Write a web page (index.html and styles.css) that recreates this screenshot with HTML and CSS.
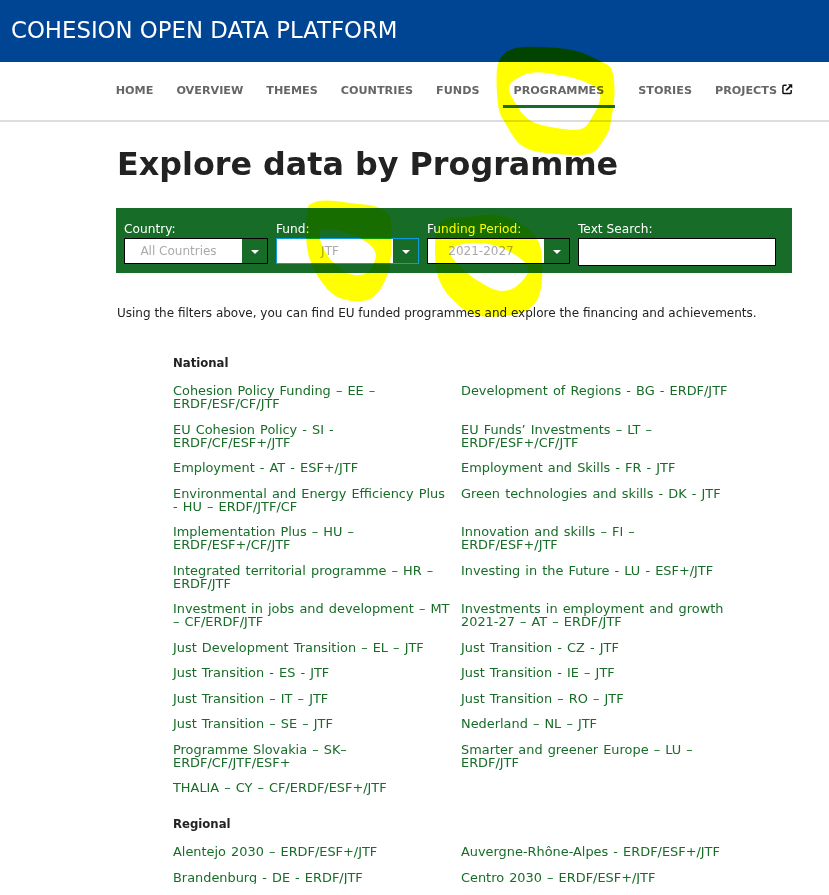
FILE: index.html
```html
<!DOCTYPE html>
<html lang="en">
<head>
    <meta charset="UTF-8">
    <meta name="viewport" content="width=device-width, initial-scale=1.0">
    <title>Cohesion Open Data Platform</title>
    <link rel="stylesheet" href="styles.css">
</head>
<body>
    <header class="site-header">COHESION OPEN DATA PLATFORM</header>
    <nav class="topnav">
        <a href="#">HOME</a>
        <a href="#">OVERVIEW</a>
        <a href="#">THEMES</a>
        <a href="#">COUNTRIES</a>
        <a href="#">FUNDS</a>
        <a href="#" class="active">PROGRAMMES</a>
        <a href="#">STORIES</a>
        <a href="#" class="external">PROJECTS
            <svg class="ext-icon" viewBox="0 0 12 12" width="11" height="12" aria-hidden="true">
                <path d="M5 2H2.2C1.500 2 1 2.500 1 3.200v6.600C1 10.500 1.500 11 2.200 11h6.600c.7 0 1.200-.5 1.200-1.200V7" fill="none" stroke="#111" stroke-width="1.600"/>
                <path d="M4.500 7.500 10 2" fill="none" stroke="#111" stroke-width="1.800"/>
                <path d="M6.500 .8h4.700v4.700z" fill="#111"/>
            </svg>
        </a>
    </nav>

    <main class="content">
        <h1>Explore data by Programme</h1>

        <div class="filters">
            <div class="filter">
                <label>Country:</label>
                <div class="select wide"><span class="value">All Countries</span><span class="caret"></span></div>
            </div>
            <div class="filter">
                <label>Fund:</label>
                <div class="select focused"><span class="value">JTF</span><span class="caret"></span></div>
            </div>
            <div class="filter">
                <label>Funding Period:</label>
                <div class="select"><span class="value">2021-2027</span><span class="caret"></span></div>
            </div>
            <div class="filter">
                <label>Text Search:</label>
                <input type="text">
            </div>
        </div>

        <p class="intro">Using the filters above, you can find EU funded programmes and explore the financing and achievements.</p>

        <h2>National</h2>
        <ul class="programmes">
            <li><a href="#">Cohesion Policy Funding – EE –<br>ERDF/ESF/CF/JTF</a></li>
            <li><a href="#">Development of Regions - BG - ERDF/JTF</a></li>
            <li><a href="#">EU Cohesion Policy - SI -<br>ERDF/CF/ESF+/JTF</a></li>
            <li><a href="#">EU Funds’ Investments – LT –<br>ERDF/ESF+/CF/JTF</a></li>
            <li><a href="#">Employment - AT - ESF+/JTF</a></li>
            <li><a href="#">Employment and Skills - FR - JTF</a></li>
            <li><a href="#">Environmental and Energy Efficiency Plus<br>- HU – ERDF/JTF/CF</a></li>
            <li><a href="#">Green technologies and skills - DK - JTF</a></li>
            <li><a href="#">Implementation Plus – HU –<br>ERDF/ESF+/CF/JTF</a></li>
            <li><a href="#">Innovation and skills – FI –<br>ERDF/ESF+/JTF</a></li>
            <li><a href="#">Integrated territorial programme – HR –<br>ERDF/JTF</a></li>
            <li><a href="#">Investing in the Future - LU - ESF+/JTF</a></li>
            <li><a href="#">Investment in jobs and development – MT<br>– CF/ERDF/JTF</a></li>
            <li><a href="#">Investments in employment and growth<br>2021-27 – AT – ERDF/JTF</a></li>
            <li><a href="#">Just Development Transition – EL – JTF</a></li>
            <li><a href="#">Just Transition - CZ - JTF</a></li>
            <li><a href="#">Just Transition - ES - JTF</a></li>
            <li><a href="#">Just Transition - IE – JTF</a></li>
            <li><a href="#">Just Transition – IT – JTF</a></li>
            <li><a href="#">Just Transition – RO – JTF</a></li>
            <li><a href="#">Just Transition – SE – JTF</a></li>
            <li><a href="#">Nederland – NL – JTF</a></li>
            <li><a href="#">Programme Slovakia – SK–<br>ERDF/CF/JTF/ESF+</a></li>
            <li><a href="#">Smarter and greener Europe – LU –<br>ERDF/JTF</a></li>
            <li><a href="#">THALIA – CY – CF/ERDF/ESF+/JTF</a></li>
        </ul>

        <h2 class="regional">Regional</h2>
        <ul class="programmes">
            <li><a href="#">Alentejo 2030 – ERDF/ESF+/JTF</a></li>
            <li><a href="#">Auvergne-Rhône-Alpes - ERDF/ESF+/JTF</a></li>
            <li><a href="#">Brandenburg - DE - ERDF/JTF</a></li>
            <li><a href="#">Centro 2030 – ERDF/ESF+/JTF</a></li>
        </ul>
    </main>

    <!-- highlighter marks drawn on top of the page -->
    <svg class="marker" viewBox="0 0 829 895" width="829" height="895" aria-hidden="true">
        <path fill-rule="evenodd" d="M497 69Q498 60 503 55Q508 50 516 48Q525 46 543 47Q562 48 572 50Q582 52 592 57Q602 62 608 65Q613 68 614 80Q615 92 614 101Q613 110 611 120Q610 130 606 136Q602 143 597 149Q592 155 577 155Q562 155 547 153Q532 152 524 147Q517 143 511 133Q505 123 501 116Q498 110 497 94Q496 78 497 69Z
            M509 90Q508 85 513 81Q518 77 526 74Q535 71 546 73Q558 75 570 77Q582 80 592 85Q602 90 600 99Q598 108 596 110Q595 112 591 119Q587 127 581 129Q575 131 556 128Q538 125 531 121Q525 117 521 112Q518 107 514 101Q510 95 509 90Z"/>
        <path fill-rule="evenodd" d="M306 228Q307 208 309 205Q312 203 318 201Q325 200 336 201Q348 203 369 205Q390 208 391 222Q392 237 391 253Q390 270 386 278Q383 287 377 293Q372 300 362 301Q352 302 343 299Q335 297 328 290Q322 283 317 275Q312 267 309 257Q306 247 306 228Z
            M321 243Q318 233 321 230Q325 228 335 230Q345 232 353 235Q362 238 370 245Q378 252 375 260Q373 268 369 271Q365 275 358 275Q352 276 345 272Q338 268 331 260Q325 253 321 243Z"/>
        <path fill-rule="evenodd" d="M435 250Q435 228 440 223Q445 218 456 217Q468 217 483 215Q498 213 511 219Q525 225 533 233Q542 242 542 262Q543 282 540 292Q538 302 530 308Q522 315 503 316Q485 318 475 315Q465 312 455 302Q445 293 440 282Q435 272 435 250Z
            M453 259Q448 253 451 249Q455 245 468 243Q482 242 493 245Q505 248 517 256Q530 265 528 271Q527 277 519 284Q512 291 503 291Q495 291 485 285Q475 280 466 272Q458 265 453 259Z"/>
    </svg>
</body>
</html>
```

FILE: styles.css
```css
html, body {
    background-color: white;
}

body {
    margin: 0;
    position: relative;
    color: #222;
    font-family: "DejaVu Sans", Verdana, sans-serif;
    font-size: 12px;
}

.site-header {
    height: 62px;
    padding-left: 11px;
    background-color: #004494;
    color: white;
    font-size: 22.800px;
    line-height: 60px;
}

.topnav {
    display: flex;
    justify-content: flex-end;
    align-items: flex-start;
    gap: 23px;
    padding: 22px 36px 12px 0;
    border-bottom: 2px solid #ddd;
}

.topnav a {
    color: #666;
    font-size: 11.200px;
    font-weight: bold;
    line-height: 14px;
    text-decoration: none;
}

.topnav .active {
    padding: 0 11px 7px;
    border-bottom: 3px solid #176d27;
}

.topnav .external {
    display: flex;
    gap: 5px;
}

.ext-icon {
    margin-top: -1px;
}

.content {
    width: 676px;
    margin-left: 116px;
}

h1 {
    margin: 23px 0 25px 1px;
    font-size: 31.800px;
    line-height: 38px;
    font-weight: bold;
    color: #222;
}

.filters {
    display: flex;
    gap: 8px;
    height: 65px;
    padding: 14px 8px 0;
    box-sizing: border-box;
    background-color: #176d27;
}

.filter label {
    display: block;
    height: 16px;
    color: white;
    font-size: 12.200px;
    line-height: 15px;
}

.select {
    display: flex;
    width: 143px;
    height: 26px;
    box-sizing: border-box;
    border: 1px solid black;
}

.select.wide {
    width: 144px;
}

.select.focused {
    border-color: #0b9be0;
}

.value {
    flex: 1;
    padding-right: 10px;
    background-color: white;
    color: #aaa;
    line-height: 24px;
    text-align: center;
}

.caret {
    display: flex;
    align-items: center;
    justify-content: center;
    width: 25px;
}

.caret::before {
    content: "";
    margin-top: 2px;
    border-left: 4px solid transparent;
    border-right: 4px solid transparent;
    border-top: 4px solid white;
}

.filter input {
    display: block;
    width: 198px;
    height: 28px;
    margin: 0;
    padding: 0;
    box-sizing: border-box;
    border: 1px solid black;
    background-color: white;
}

.intro {
    margin: 33px 0 0 1px;
    line-height: 15px;
}

h2 {
    margin: 35px 0 0 57px;
    font-size: 11.700px;
    line-height: 15px;
    font-weight: bold;
}

h2.regional {
    margin-top: 23px;
}

.programmes {
    display: grid;
    grid-template-columns: 288px 288px;
    row-gap: 12.500px;
    margin: 13px 0 0 57px;
    padding: 0;
    list-style: none;
    font-size: 12.900px;
    line-height: 13px;
    word-spacing: 1px;
    white-space: nowrap;
}

.programmes a {
    color: #176d27;
    text-decoration: none;
}

.marker {
    position: absolute;
    top: 0;
    left: 0;
    fill: #ffff00;
    mix-blend-mode: multiply;
    pointer-events: none;
}
```
